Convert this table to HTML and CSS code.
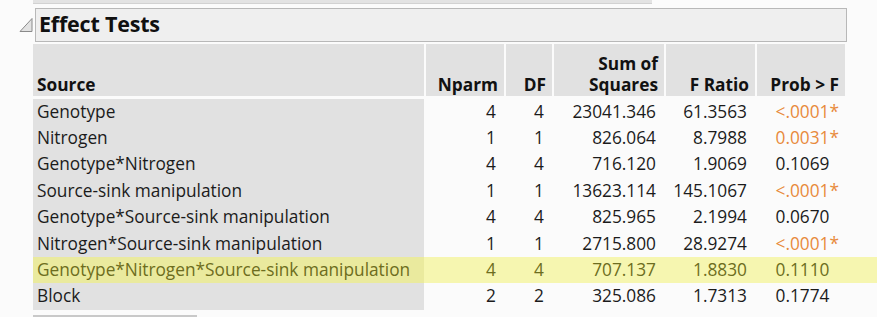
FILE: index.html
```html
<!DOCTYPE html>
<html>
<head>
<meta charset="utf-8">
<link rel="stylesheet" href="styles.css">
</head>
<body>
<div class="report">
  <div class="topbar"></div>
  <div class="outline">
    <svg class="disclosure" width="14" height="16" viewBox="0 0 14 16">
      <path d="M13 1.5 L13 14.5 L1 14.5 Z" fill="#e2e2e2" stroke="#8a8a8a" stroke-width="1"/>
    </svg>
    <div class="outline-title">Effect Tests</div>
  </div>
  <table class="effects">
    <thead>
      <tr>
        <th class="src">Source</th>
        <th class="w-nparm">Nparm</th>
        <th class="w-df">DF</th>
        <th class="w-ss">Sum of<br>Squares</th>
        <th class="w-f">F Ratio</th>
        <th class="w-p">Prob &gt; F</th>
        <th class="pad"></th>
      </tr>
    </thead>
    <tbody>
      <tr><td class="src">Genotype</td><td>4</td><td>4</td><td>23041.346</td><td>61.3563</td><td class="p sig">&lt;.0001*</td><td class="pad"></td></tr>
      <tr><td class="src">Nitrogen</td><td>1</td><td>1</td><td>826.064</td><td>8.7988</td><td class="p sig">0.0031*</td><td class="pad"></td></tr>
      <tr><td class="src">Genotype*Nitrogen</td><td>4</td><td>4</td><td>716.120</td><td>1.9069</td><td class="p">0.1069<span class="ghost">*</span></td><td class="pad"></td></tr>
      <tr><td class="src">Source-sink manipulation</td><td>1</td><td>1</td><td>13623.114</td><td>145.1067</td><td class="p sig">&lt;.0001*</td><td class="pad"></td></tr>
      <tr><td class="src">Genotype*Source-sink manipulation</td><td>4</td><td>4</td><td>825.965</td><td>2.1994</td><td class="p">0.0670<span class="ghost">*</span></td><td class="pad"></td></tr>
      <tr><td class="src">Nitrogen*Source-sink manipulation</td><td>1</td><td>1</td><td>2715.800</td><td>28.9274</td><td class="p sig">&lt;.0001*</td><td class="pad"></td></tr>
      <tr class="hl"><td class="src">Genotype*Nitrogen*Source-sink manipulation</td><td>4</td><td>4</td><td>707.137</td><td>1.8830</td><td class="p">0.1110<span class="ghost">*</span></td><td class="pad"></td></tr>
      <tr><td class="src">Block</td><td>2</td><td>2</td><td>325.086</td><td>1.7313</td><td class="p">0.1774<span class="ghost">*</span></td><td class="pad"></td></tr>
    </tbody>
  </table>
  <div class="nextbar"></div>
</div>
</body>
</html>
```
FILE: styles.css
```css
html, body {
  margin: 0;
  padding: 0;
  background: #fbfbfb;
}
body {
  width: 877px;
  height: 317px;
  overflow: hidden;
  font-family: "Open Sans", "Noto Sans", sans-serif;
  color: #1b1b1b;
}
.report {
  display: flex;
  flex-direction: column;
}
.topbar {
  margin-left: 33px;
  width: 619px;
  height: 3px;
  background: #e3e3e3;
  border-bottom: 1px solid #d2d2d2;
}
.outline {
  display: flex;
  align-items: center;
  margin-top: 4px;
  padding-left: 19px;
}
.disclosure {
  flex: none;
  margin-right: 2px;
}
.outline-title {
  box-sizing: border-box;
  width: 812px;
  height: 34px;
  border: 1px solid #b8b8b8;
  background: #efefef;
  font-weight: 700;
  font-size: 21.5px;
  line-height: 30px;
  padding-left: 3px;
  color: #101010;
  letter-spacing: -0.2px;
}
.effects {
  margin-left: 33px;
  margin-top: 2px;
  border-collapse: collapse;
  table-layout: fixed;
  font-size: 17.3px;
}
.effects th {
  box-sizing: border-box;
  height: 53px;
  background: #e1e1e1;
  border-right: 2px solid #fbfbfb;
  border-bottom: 3px solid #fbfbfb;
  font-weight: 700;
  font-size: 17.3px;
  line-height: 21px;
  text-align: right;
  vertical-align: bottom;
  padding: 0 6px 1px 0;
  color: #111;
  white-space: nowrap;
}
.effects th.src {
  text-align: left;
  padding-left: 4px;
  width: 392px;
}
.effects th.w-nparm { width: 80px; }
.effects th.w-df { width: 48px; }
.effects th.w-ss { width: 112px; }
.effects th.w-f { width: 91px; }
.effects th.w-p { width: 89px; border-right: 0; }
.effects th.pad {
  width: 32px;
  background: transparent;
  border: 0;
}
.effects td {
  height: 26.4px;
  padding: 0 9px 0 0;
  text-align: right;
  white-space: nowrap;
  line-height: 20px;
}
.effects td.src {
  text-align: left;
  padding-left: 4px;
  background: #e1e1e1;
  border-right: 2px solid #fbfbfb;
}
.effects td.p {
  padding-right: 6px;
}
.effects td.pad {
  padding: 0;
}
.sig {
  color: #e88a3c;
}
.ghost {
  visibility: hidden;
}
.effects tr.hl td {
  background: #f6f6b0;
  color: #6d6d20;
}
.effects tr.hl td.src {
  background: #eaea9e;
  border-right-color: #f6f6b0;
}
.nextbar {
  margin-left: 33px;
  margin-top: 5px;
  width: 164px;
  height: 2px;
  background: #c9c9c9;
}
```
